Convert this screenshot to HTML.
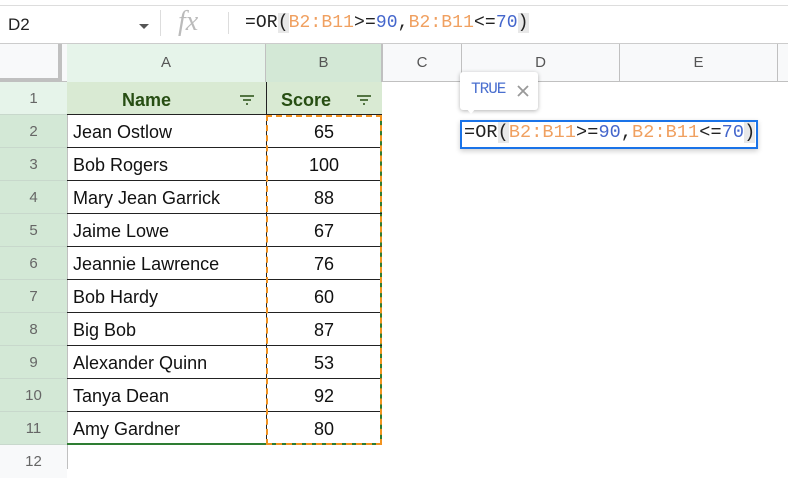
<!DOCTYPE html>
<html><head><style>
*{margin:0;padding:0;box-sizing:border-box}
body{width:788px;height:469px;overflow:hidden;background:#fff;font-family:"Liberation Sans",Arial,sans-serif;position:relative}
.a{position:absolute}
.rh{position:absolute;left:0;width:67px;height:33px;background:#d3e8d6;color:#666;font-size:15px;text-align:center;line-height:33px;border-bottom:1px solid #c8d8cc}
.cell{position:absolute;height:33px;font-size:18px;color:#111;line-height:35px}
.mono{font-family:"Liberation Mono",monospace}
.o{color:#f0a060}.b{color:#4466cc}
</style></head><body>
<div class="a" style="left:0;top:5px;width:788px;height:1px;background:#ddd"></div>
<div class="a" style="left:0;top:43px;width:788px;height:1px;background:#ccc"></div>
<div class="a" style="left:8px;top:15px;font-size:17px;color:#222">D2</div>
<div class="a" style="left:139px;top:24px;width:0;height:0;border-left:5px solid transparent;border-right:5px solid transparent;border-top:5px solid #555"></div>
<div class="a" style="left:160px;top:10px;width:1px;height:26px;background:#ddd"></div>
<div class="a" style="left:178px;top:6px;font-size:28px;color:#bbb;font-family:'Liberation Serif',serif;font-style:italic">fx</div>
<div class="a" style="left:228px;top:12px;width:1px;height:22px;background:#ddd"></div>
<div class="a mono" style="left:245px;top:13px;font-size:18px;letter-spacing:0.1px;color:#222">=OR<span style="background:#e8e8e8">(</span><span class="o">B2:B11</span>&gt;=<span class="b">90</span>,<span class="o">B2:B11</span>&lt;=<span class="b">70</span><span style="background:#e8e8e8">)</span></div>
<div class="a" style="left:0;top:44px;width:788px;height:38px;background:#f8f9fa;border-bottom:1px solid #c0c0c0"></div>
<div class="a" style="left:0;top:44px;width:62px;height:38px;background:#f8f9fa;border-right:4px solid #c0c0c0;border-bottom:4px solid #c0c0c0"></div>
<div class="a" style="left:67px;top:44px;width:199px;height:38px;background:#e6f4ea;color:#555;font-size:15px;text-align:center;line-height:38px;border-right:1px solid #c0c0c0">A</div>
<div class="a" style="left:266px;top:44px;width:116px;height:38px;background:#d3e8d6;color:#555;font-size:15px;text-align:center;line-height:38px;border-right:1px solid #c0c0c0">B</div>
<div class="a" style="left:382px;top:44px;width:80px;height:38px;color:#555;font-size:15px;text-align:center;line-height:38px;border-right:1px solid #c0c0c0;border-left:1px solid #c0c0c0">C</div>
<div class="a" style="left:462px;top:44px;width:158px;height:38px;color:#555;font-size:15px;text-align:center;line-height:38px;border-right:1px solid #c0c0c0">D</div>
<div class="a" style="left:620px;top:44px;width:158px;height:38px;color:#555;font-size:15px;text-align:center;line-height:38px;border-right:1px solid #c0c0c0">E</div>
<div class="rh" style="top:82px;background:#e6f4ea">1</div>
<div class="rh" style="top:115px">2</div><div class="rh" style="top:148px">3</div><div class="rh" style="top:181px">4</div><div class="rh" style="top:214px">5</div><div class="rh" style="top:247px">6</div><div class="rh" style="top:280px">7</div><div class="rh" style="top:313px">8</div><div class="rh" style="top:346px">9</div><div class="rh" style="top:379px">10</div><div class="rh" style="top:412px">11</div>
<div class="rh" style="top:445px;background:#f8f9fa;border:none">12</div>
<div class="a" style="left:67px;top:82px;width:1px;height:387px;background:#c0c0c0"></div>
<div class="a" style="left:67px;top:82px;width:315px;height:33px;background:#d9ead3;border-bottom:1px solid #222"></div>
<div class="a" style="left:266px;top:82px;width:1px;height:33px;background:#222"></div>
<div class="a" style="left:122px;top:90px;font-size:18px;font-weight:bold;color:#274e13">Name</div>
<div class="a" style="left:281px;top:90px;font-size:18px;font-weight:bold;color:#274e13">Score</div>
<svg class="a" style="left:239px;top:94px" width="16" height="12"><path d="M1 2h14M4 6h8M7 10h2" stroke="#274e13" stroke-width="1.5"/></svg>
<svg class="a" style="left:356px;top:94px" width="16" height="12"><path d="M1 2h14M4 6h8M7 10h2" stroke="#274e13" stroke-width="1.5"/></svg>
<div class="a" style="left:67px;top:115px;width:315px;height:330px;border-bottom:2px solid #2e7d32;border-right:2px solid #2e7d32"></div>
<div class="a" style="left:67px;top:147px;width:315px;height:1px;background:#222"></div>
<div class="a" style="left:67px;top:180px;width:315px;height:1px;background:#222"></div>
<div class="a" style="left:67px;top:213px;width:315px;height:1px;background:#222"></div>
<div class="a" style="left:67px;top:246px;width:315px;height:1px;background:#222"></div>
<div class="a" style="left:67px;top:279px;width:315px;height:1px;background:#222"></div>
<div class="a" style="left:67px;top:312px;width:315px;height:1px;background:#222"></div>
<div class="a" style="left:67px;top:345px;width:315px;height:1px;background:#222"></div>
<div class="a" style="left:67px;top:378px;width:315px;height:1px;background:#222"></div>
<div class="a" style="left:67px;top:411px;width:315px;height:1px;background:#222"></div>
<div class="a" style="left:266px;top:115px;width:1px;height:330px;background:#222"></div>
<div class="a" style="left:266px;top:115px;width:116px;height:330px;border:2px dashed #f29320"></div>
<div class="cell" style="left:73px;top:115px">Jean Ostlow</div><div class="cell" style="left:266px;width:116px;text-align:center;top:115px">65</div>
<div class="cell" style="left:73px;top:148px">Bob Rogers</div><div class="cell" style="left:266px;width:116px;text-align:center;top:148px">100</div>
<div class="cell" style="left:73px;top:181px">Mary Jean Garrick</div><div class="cell" style="left:266px;width:116px;text-align:center;top:181px">88</div>
<div class="cell" style="left:73px;top:214px">Jaime Lowe</div><div class="cell" style="left:266px;width:116px;text-align:center;top:214px">67</div>
<div class="cell" style="left:73px;top:247px">Jeannie Lawrence</div><div class="cell" style="left:266px;width:116px;text-align:center;top:247px">76</div>
<div class="cell" style="left:73px;top:280px">Bob Hardy</div><div class="cell" style="left:266px;width:116px;text-align:center;top:280px">60</div>
<div class="cell" style="left:73px;top:313px">Big Bob</div><div class="cell" style="left:266px;width:116px;text-align:center;top:313px">87</div>
<div class="cell" style="left:73px;top:346px">Alexander Quinn</div><div class="cell" style="left:266px;width:116px;text-align:center;top:346px">53</div>
<div class="cell" style="left:73px;top:379px">Tanya Dean</div><div class="cell" style="left:266px;width:116px;text-align:center;top:379px">92</div>
<div class="cell" style="left:73px;top:412px">Amy Gardner</div><div class="cell" style="left:266px;width:116px;text-align:center;top:412px">80</div>
<div class="a" style="left:460px;top:72px;width:78px;height:38px;background:#fff;border-radius:3px;box-shadow:0 1px 4px rgba(0,0,0,.3)"></div>
<div class="a" style="left:466px;top:108px;width:0;height:0;border-left:5px solid transparent;border-right:5px solid transparent;border-top:6px solid #fff"></div>
<div class="a mono" style="left:471px;top:80px;font-size:16px;letter-spacing:-1px;color:#4a6fcf">TRUE</div>
<svg class="a" style="left:517px;top:85px" width="12" height="12"><path d="M1 1L11 11M11 1L1 11" stroke="#999" stroke-width="1.8"/></svg>
<div class="a" style="left:460px;top:120px;width:298px;height:29px;border:2px solid #1a73e8;background:#fff;box-shadow:0 2px 5px rgba(0,0,0,.2)"></div>
<div class="a mono" style="left:464px;top:122px;font-size:18.5px;letter-spacing:0.1px;color:#222">=OR<span style="background:#e8e8e8">(</span><span class="o">B2:B11</span>&gt;=<span class="b">90</span>,<span class="o">B2:B11</span>&lt;=<span class="b">70</span><span style="background:#e8e8e8">)</span></div>
</body></html>
